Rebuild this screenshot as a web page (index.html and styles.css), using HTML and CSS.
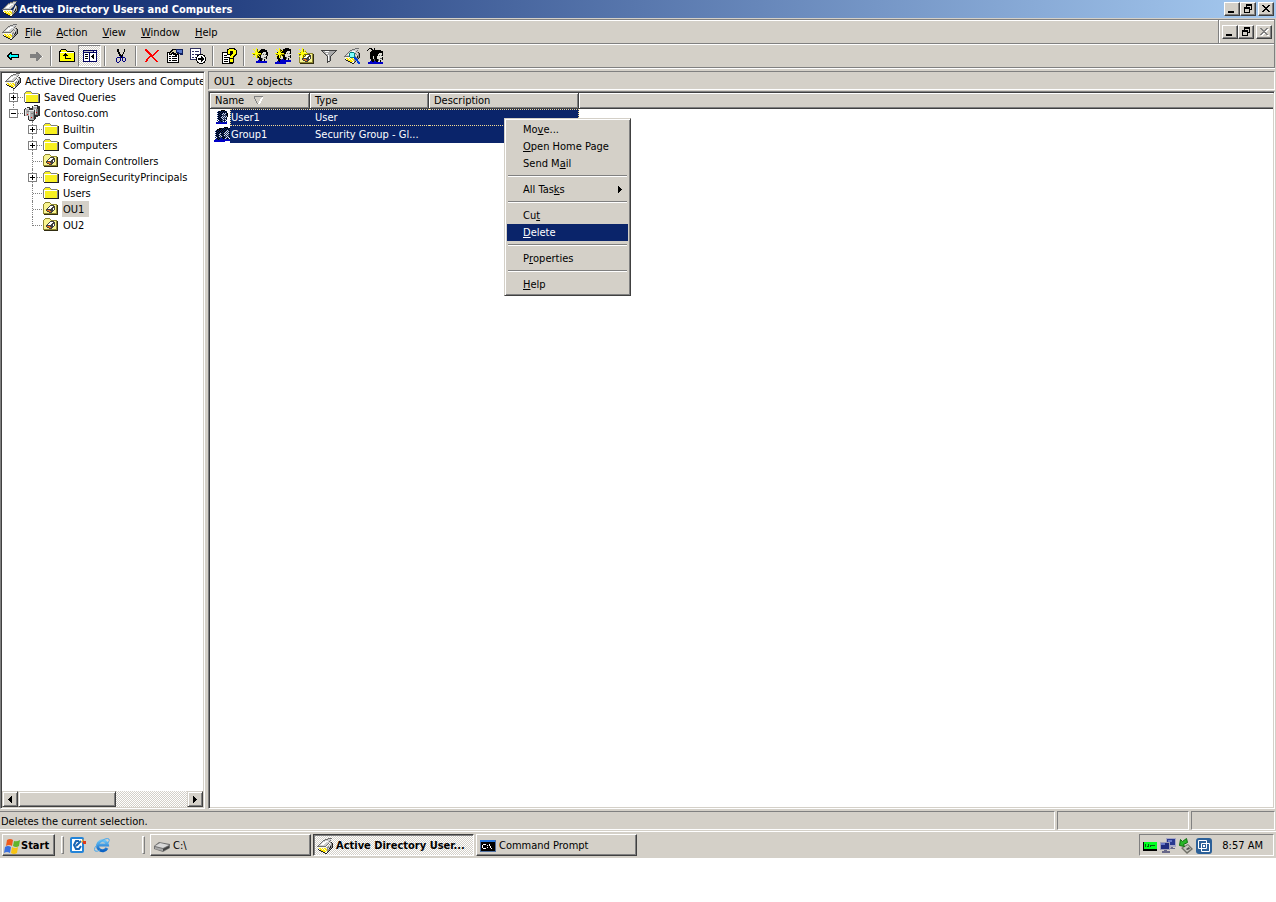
FILE: index.html
```html
<!DOCTYPE html>
<html lang="en">
<head>
    <meta charset="UTF-8">
    <meta name="viewport" content="width=device-width, initial-scale=1.0">
    <title>Active Directory Users and Computers</title>
    <link rel="stylesheet" href="styles.css">
</head>

<body>
<!-- icons -->
<svg class="defs" width="0" height="0" aria-hidden="true">
    <defs>
        <linearGradient id="ball" x1="0" y1="0" x2="0" y2="1">
            <stop offset="0" stop-color="#6cc4f5"/><stop offset="1" stop-color="#0b62c4"/>
        </linearGradient>
    </defs>
    <symbol id="book" viewBox="0 0 16 16">
        <path fill="#707070" d="M0 8h1v-1h1v-1h1v-1h1v-1h1v-1h1v-1h2v-1h3v-1h4v1h-1v2h-1v1h-1v2h-1v1h-1v1h-1v1h-9z"/>
        <path fill="#d0d0d0" d="M2 8v-1h1v-1h1v-1h1v-1h1v-1h2v-1h3v-1h3v1h-1v1h-1v2h-1v1h-1v1h-1v1z"/>
        <path fill="#fff" d="M4 7v-1h1v-1h1v-1h2v-1h3v1h-2v1h-1v1h-1v1z"/>
        <path fill="#f8f8e8" d="M1 9h9v1h1v5h-3v-1h-2v-1h-2v-1h-2v-1h-1z"/>
        <path fill="#ffe600" d="M2 10h2v1h-2zM5 10h1v1h-1zM7 10h2v1h-2zM3 11h2v1h-2zM6 11h1v1h-1zM8 11h2v1h-2zM4 12h4v1h-4zM9 12h1v1h-1zM6 13h3v1h-3z"/>
        <path fill="#909090" d="M10 9h1v-1h1v-2h1v-2h2v1h1v5h-1v1h-1v1h-1v1h-1v1h-1v1h-1v-5h-1z"/>
        <path fill="#e0e0e0" d="M12 7h1v2h-1zM13 5h1v2h-1zM11 10h1v1h-1z"/>
        <path fill="#202020" d="M15 5h1v5h-1zM14 10h1v1h-1zM13 11h1v1h-1zM12 12h1v1h-1zM11 13h1v1h-1zM10 14h1v1h-1zM8 15h2v1h-2zM6 14h2v1h-2zM4 13h2v1h-2zM2 12h2v1h-2zM1 11h1v1h-1zM14 4h1v1h-1zM13 8h1v2h-1zM12 10h1v1h-1z"/>
    </symbol>
    <symbol id="folder" viewBox="0 0 16 16">
        <path fill="#f8f020" d="M1 3h1v-1h5l1 2h7v9h-14z"/>
        <path fill="#808080" d="M2 2h5v1h-5zM1 3h1v1h-1zM7 3h1v1h-1zM8 4h6v1h-6zM0 4h1v9h-1zM14 5h1v8h-1z"/>
        <path fill="#fff" d="M1 5h13v1h-13zM1 5h1v8h-1z"/>
        <path fill="#202020" d="M15 5h1v9h-1zM1 13h14v1h-14z"/>
    </symbol>
    <symbol id="ou" viewBox="0 0 16 16">
        <path fill="#908830" d="M0 3h1v-1h1v-1h5v1h1v1h6v10h-14z"/>
        <path fill="#f8f490" d="M1 3h1v-1h5v1h1v1h5v8h-12z"/>
        <path fill="#302c10" d="M14 4h1v10h-14v-1h13z"/>
        <path fill="#404040" d="M3 8h1v-1h1v-1h1v-1h1v-1h4v1h1v4h-1v1h-1v1h-1v1h-3v-1h-2v-1h-1z"/>
        <path fill="#fff" d="M5 7h1v-1h1v-1h3v1h-1v1h-1v1h-3zM10 7h1v2h-1z"/>
        <path fill="#f07018" d="M4 9h3v1h-3zM6 10h2v1h-2z"/>
    </symbol>
    <symbol id="domain" viewBox="0 0 16 16">
        <path fill="#303030" d="M0 4h1v-1h2v-1h3v1h2v-2h2v-1h4v1h2v10h-2v1h-2v2h-1v1h-1v1h-5v-1h-1v-4h-4z"/>
        <path fill="#b0b0b0" d="M1 4h4v7h-4zM5 6h5v9h-5zM9 2h4v8h-2v-5h-2z"/>
        <path fill="#e8e8e8" d="M2 3h3v1h-3zM5 5h5v1h-5zM9 1h4v1h-4zM1 5h1v5h-1zM5 7h1v7h-1zM11 4h1v5h-1z"/>
        <path fill="#808080" d="M3 6h2v1h-2zM7 8h3v1h-3zM12 4h2v6h-2zM9 7h1v7h-1z"/>
        <path fill="#e00000" d="M3 9h1v1h-1zM7 12h1v1h-1zM12 7h1v1h-1z"/>
    </symbol>
    <symbol id="back" viewBox="0 0 16 16">
        <path d="M1 8h1v-1h1v-1h1v-1h1v-1h2v2h7v4h-7v2h-2v-1h-1v-1h-1v-1h-1v-1h-1z"/>
        <path fill="#00ffff" d="M3 8h1v-1h1v-1h1v1h7v2h-7v1h-1v-1h-1v-1h-1z"/>
    </symbol>
    <symbol id="forward" viewBox="0 0 16 16">
        <path fill="#fff" d="M3 10h6v2h3v-1h1v-1h1v-1h1v-1h-1v2h-2v2h-3v-2h-6z"/>
        <path fill="#808080" d="M2 6h6v-2h2v1h1v1h1v1h1v1h1v1h-1v1h-1v1h-1v1h-1v1h-2v-3h-6z"/>
    </symbol>
    <symbol id="up" viewBox="0 0 16 16">
        <path d="M1 2h1v-1h5v1h1v1h7v1h1v10h-16v-11h1z"/>
        <path fill="#ffff00" d="M2 2h5v1h1v1h7v9h-14v-9h1z"/>
        <path fill="#fff" d="M1 4h14v1h-14z"/>
        <path d="M6 5h1v1h1v1h1v1h-2v2h5v1h-6v-3h-2v-1h1v-1h1z"/>
    </symbol>
    <symbol id="panes" viewBox="0 0 16 16">
        <path fill="#000060" d="M1 2h14v12h-14z"/>
        <path fill="#fff" d="M2 5h5v8h-5zM8 5h6v8h-6z"/>
        <path fill="#c0c0c0" d="M2 3h9v1h-9z"/>
        <path fill="#fff" d="M12 3h2v1h-2z"/>
        <path d="M3 6h3v1h-3zM3 8h3v1h-3zM3 10h3v1h-3zM9 8h1v-1h1v-1h1v5h-1v-1h-1v-1h-1z"/>
    </symbol>
    <symbol id="cut" viewBox="0 0 16 16">
        <path d="M5 1h1v3h1v2h1v1h1v-1h1v-2h1v-3h1v3h-1v2h-1v2h-1v2h-2v-2h-1v-2h-1v-2h-1v-3z"/>
        <path fill="#000080" d="M7 8h1v5h-1zM4 9h3v1h-3zM3 10h1v4h-1zM4 14h2v1h-2zM6 13h1v1h-1zM9 8h1v5h-1zM10 9h2v1h-2zM12 10h1v3h-1zM10 13h2v1h-2z"/>
    </symbol>
    <symbol id="delete" viewBox="0 0 16 16">
        <path fill="#ff0000" d="M1 1h2v1h1v1h1v1h1v1h1v1h1v1h1v-1h1v-1h1v-1h1v-1h1v-1h2v1h-1v1h-1v1h-1v1h-1v1h-1v1h-1v1h1v1h1v1h1v1h1v1h1v1h-2v-1h-1v-1h-1v-1h-1v-1h-1v-1h-2v1h-1v1h-1v2h-1v1h-2v-1h1v-2h1v-1h1v-1h1v-1h1v-1h-1v-1h-1v-1h-1v-1h-1v-1h-1v-1h-1z"/>
    </symbol>
    <symbol id="props" viewBox="0 0 16 16">
        <path d="M0 4h12v11h-12z"/><path fill="#fff" d="M1 5h10v9h-10z"/>
        <path d="M2 8h2v1h-2zM5 8h5v1h-5zM2 10h2v1h-2zM5 10h5v1h-5zM2 12h2v1h-2zM5 12h5v1h-5z"/>
        <path d="M2 6v-2h1v-1h1v-1h1v-1h5v1h1v5h-1v1h-2v-1h-2v-1h-1v1h-3z"/>
        <path fill="#d8d0a8" d="M3 5h1v-1h1v-1h1v-1h3v1h1v3h-1v-1h-2v-1h-2v1h-1v1h-1z"/>
        <path fill="#102060" d="M9 1h7v6h-3v-1h-2v-1h-2z"/><path fill="#5878c8" d="M10 2h5v3h-3v-1h-2z"/>
    </symbol>
    <symbol id="export" viewBox="0 0 16 16">
        <path fill="#303060" d="M0 0h11v12h-11z"/><path fill="#fff" d="M1 1h9v10h-9z"/>
        <path fill="#303060" d="M2 3h2v1h-2zM5 3h4v1h-4zM2 6h2v1h-2zM5 6h4v1h-4zM2 9h2v1h-2zM5 9h3v1h-3z"/>
        <path d="M9 6h4v1h2v2h1v4h-1v2h-2v1h-4v-1h-2v-2h-1v-4h1v-2h2z"/>
        <path fill="#fff" d="M9 7h4v1h1v1h1v4h-1v1h-1v1h-4v-1h-1v-1h-1v-4h1v-1h1z"/>
        <path d="M8 10h3v-2h1v1h1v1h1v2h-1v1h-1v1h-1v-2h-3z"/>
    </symbol>
    <symbol id="help" viewBox="0 0 16 16">
        <path d="M1 4h11v12h-11z"/><path fill="#fff" d="M2 5h9v10h-9z"/>
        <path d="M3 7h3v1h-3zM3 9h5v1h-5zM3 11h4v1h-4zM3 13h4v1h-4z"/>
        <path d="M6 1h2v-1h6v1h1v1h1v5h-1v1h-1v1h-1v6h-5v-6h1v-2h-3z"/>
        <path fill="#ffff00" d="M7 2h1v-1h5v1h2v4h-1v1h-1v1h-1v2h-3v-2h1v-1h1v-1h1v-3h-3v3h-2zM9 11h3v3h-3z"/>
    </symbol>
    <symbol id="person" viewBox="0 0 16 16">
        <path fill="#0000c8" d="M3 13h2v-1h7v1h2v2h-11z"/>
        <path d="M5 3h1v-1h2v-1h4v1h2v2h1v4h-1v3h-2v2h-5v-1h-1v-2h-1z"/>
        <path fill="#e0e0d8" d="M9 5h1v-1h3v3h1v1h-1v3h-2v2h-2v-3h-1v-3h1z"/>
        <path fill="#606060" d="M10 6h1v1h-1zM12 6h1v1h-1zM11 9h2v1h-2zM9 10h1v2h-1z"/>
    </symbol>
    <symbol id="star" viewBox="0 0 16 16">
        <path fill="#706800" d="M5 1h1v9h-1zM1 6h9v1h-9z"/>
        <path fill="#ffff00" d="M4 0h1v10h-1zM0 5h9v1h-9zM1 1h1v1h-1zM2 2h1v1h-1zM3 3h1v1h-1zM7 2h1v1h-1zM6 3h1v1h-1zM5 4h1v1h-1zM2 7h1v1h-1zM1 8h1v1h-1zM6 7h1v1h-1zM7 8h1v1h-1zM3 4h3v3h-3z"/>
    </symbol>
    <symbol id="new-user" viewBox="0 0 16 16">
        <use href="#person" x="1" y="0" width="16" height="16"/>
        <use href="#star" width="16" height="16"/>
    </symbol>
    <symbol id="new-group" viewBox="0 0 16 16">
        <use href="#person" x="-3" y="1" width="16" height="16"/>
        <use href="#person" x="2" y="-1" width="16" height="16"/>
        <use href="#star" width="16" height="16"/>
    </symbol>
    <symbol id="new-ou" viewBox="0 0 16 16">
        <use href="#ou" x="1" y="2" width="16" height="16"/>
        <use href="#star" width="16" height="16"/>
    </symbol>
    <symbol id="filter" viewBox="0 0 16 16">
        <path fill="#404040" d="M0 2h16v1h-1v1h-1v1h-1v1h-1v1h-1v1h-1v5h-1v1h-2v1h-1v-7h-1v-1h-1v-1h-1v-1h-1v-1h-1v-1h-1z"/>
        <path fill="#a8a8a8" d="M2 3h12v1h-1v1h-1v1h-1v1h-1v1h-1v5h-2v-5h-1v-1h-1v-1h-1v-1h-1v-1h-1z"/>
        <path fill="#fff" d="M3 3h5v1h-4zM5 5h2v1h-2zM7 7h1v6h-1z"/>
    </symbol>
    <symbol id="find" viewBox="0 0 16 16">
        <use href="#book" width="16" height="16"/>
        <path fill="#008080" d="M6 4h4v1h1v4h-1v1h-4v-1h-1v-4h1z"/><path fill="#80ffff" d="M6 5h4v4h-4z"/>
        <path fill="#0040e0" d="M10 9h2v1h1v1h1v2h1v1h1v2h-2v-1h-1v-2h-1v-1h-1v-1h-1z"/>
    </symbol>
    <symbol id="add-group" viewBox="0 0 16 16">
        <use href="#person" x="-2" y="1" width="16" height="16"/>
        <use href="#person" x="2" y="1" width="16" height="16"/>
        <path d="M0 2h1v-1h1v-1h3v1h1v1h1v-2h1v4h-4v-1h1v-1h-1v-1h-2v1h-1v1h-1z"/>
    </symbol>
    <symbol id="user" viewBox="0 0 16 16">
        <use href="#person" x="-1" y="0" width="16" height="16"/>
        <path stroke="#0a246a" stroke-dasharray="1 1" d="M4 2.500h10M3 3.500h10M4 4.500h10M3 5.500h10M4 6.500h10M3 7.500h10M4 8.500h10M3 9.500h10M4 10.500h9M3 11.500h10M4 12.500h9M3 13.500h10"/>
    </symbol>
    <symbol id="group" viewBox="0 0 16 16">
        <use href="#person" x="-3" y="1" width="16" height="16"/>
        <use href="#person" x="2" y="0" width="16" height="16"/>
        <path stroke="#0a246a" stroke-dasharray="1 1" d="M8 2.500h7M7 3.500h9M2 4.500h14M1 5.500h15M2 6.500h14M1 7.500h15M2 8.500h14M1 9.500h15M2 10.500h14M1 11.500h15M2 12.500h14M1 13.500h15"/>
    </symbol>
    <symbol id="sort" viewBox="0 0 9 8">
        <path fill="#808080" d="M0 0h9v1h-8v2h1v2h1v2h1v1h-1v-1h-1v-2h-1v-2h-1z"/><path fill="#fff" d="M8 1h1v2h-1v2h-1v2h-1v1h-2v-1h1v-2h1v-2h1z"/>
    </symbol>
    <symbol id="min" viewBox="0 0 12 10"><path d="M2 7h6v2h-6z"/></symbol>
    <symbol id="restore" viewBox="0 0 12 10">
        <path d="M4 0h6v6h-2v-1h1v-3h-4v1h-1zM2 3h6v6h-6zM3 5v3h4v-3z" fill-rule="evenodd"/>
    </symbol>
    <symbol id="close" viewBox="0 0 12 10">
        <path d="M2 1h2v1h1v1h2v-1h1v-1h2v1h-1v1h-1v1h-1v1h1v1h1v1h1v1h-2v-1h-1v-1h-2v1h-1v1h-2v-1h1v-1h1v-1h1v-1h-1v-1h-1v-1h-1z"/>
    </symbol>
    <symbol id="left" viewBox="0 0 4 7"><path d="M0 3h1v-1h1v-1h1v-1h1v7h-1v-1h-1v-1h-1v-1h-1z"/></symbol>
    <symbol id="right" viewBox="0 0 4 7"><path d="M0 0h1v1h1v1h1v1h1v1h-1v1h-1v1h-1v1h-1z"/></symbol>
    <symbol id="flag" viewBox="0 0 16 16">
        <path fill="#f05a1c" d="M3 2q3-2 6 0l-1 6q-3-2-6 0z"/><path fill="#62b52c" d="M10 3q3 1 6-1l-1 6q-3 2-6 0z"/>
        <path fill="#3a70e0" d="M1 9q3-2 6 0l-1 6q-3-2-6 0z"/><path fill="#f8c414" d="M8 9q3 2 6 0l-1 6q-3 2-6 0z"/>
    </symbol>
    <symbol id="desktop" viewBox="0 0 16 16">
        <rect x="0" y="0" width="14" height="16" rx="2" fill="#2384d8"/>
        <path fill="#fff" d="M2 2h10v12h-10z"/>
        <path fill="none" stroke="#1764b4" stroke-width="2" d="M9 4h-3l-2 4 2 4h3l2-3M6 9l5-5"/>
        <path fill="#f0a830" d="M11 5l2-3 1 1-2 3z"/><path fill="#e03818" d="M13 4h3v3h-3z"/>
    </symbol>
    <symbol id="ie" viewBox="0 0 16 16">
        <path fill="none" stroke="url(#ball)" stroke-width="3" d="M13 11a5 5 0 1 1 .500-3h-9"/>
        <path fill="none" stroke="#4ba9ec" d="M1 14q-2-3 4-8 7-6 10-4 1 1-1 4M1 14q2 1 5-1"/>
    </symbol>
    <symbol id="drive" viewBox="0 0 16 16">
        <path fill="#707070" d="M0 8l5-4 11 2v4l-7 4-9-3z"/><path fill="#d8d8d8" d="M1 8l5-3 9 2-6 3z"/>
        <path fill="#a8a8a8" d="M1 9l8 2v2l-8-2z"/><path fill="#404040" d="M9 11l6-3v2l-6 3z"/>
    </symbol>
    <symbol id="cmd" viewBox="0 0 16 16">
        <path fill="#5070a0" d="M0 2h16v12h-16z"/><path fill="#2878e0" d="M0 2h15v2h-15z"/><path d="M1 4h14v9h-14z"/>
        <path fill="#fff" d="M3 6h3v1h-3zM2 7h1v3h-1zM3 10h3v1h-3zM7 7h1v1h-1zM7 9h1v1h-1zM9 6h1v2h-1zM10 8h1v2h-1zM11 10h1v1h-1z"/>
    </symbol>
    <symbol id="meter" viewBox="0 0 16 16">
        <path d="M1 4h14v9h-14z"/><path fill="#00ff20" d="M2 4h13v7h-13z"/>
        <path fill="#006010" d="M3 6h1v3h-1zM5 8h2v1h-2zM6 6h1v2h-1zM8 7h1v2h-1zM9 7h4v1h-4z"/>
    </symbol>
    <symbol id="network" viewBox="0 0 16 16">
        <path fill="#a8a8c8" d="M6 0h10v9h-10z"/><path fill="#283890" d="M7 1h8v6h-8z"/>
        <path fill="#a0a0b8" d="M0 4h10v8h-10z"/><path fill="#202c80" d="M1 5h8v6h-8z"/>
        <path fill="#6878c8" d="M1 5h4v2h-4zM8 2h4v2h-4z"/><path fill="#686888" d="M4 12h3v1h3v2h-8v-2h2zM11 9h2v1h2v1h-5z"/>
    </symbol>
    <symbol id="eject" viewBox="0 0 16 16">
        <path fill="#707068" d="M3 10l7-4 5 5-6 5z"/><path fill="#c8c8c0" d="M5 10l5-3 3 4-4 3z"/><path fill="#505050" d="M8 11l3-2 1 2-3 1z"/>
        <path fill="#28b828" stroke="#107010" d="M1.500 7.500l1-6 2 2 4-3 1 4-4 2 1 2z"/>
    </symbol>
    <symbol id="vm" viewBox="0 0 16 16">
        <rect x="0" y="0" width="16" height="16" rx="3" fill="#2c6098"/>
        <path fill="none" stroke="#fff" d="M2.500 2.500h8v8h-8zM5.500 5.500h8v8h-8z"/>
        <path fill="#fff" d="M7 7h2v2h-2z"/>
    </symbol>
</svg>

<div class="desktop">
    <header class="titlebar">
        <svg class="icon"><use href="#book"/></svg>
        <h1>Active Directory Users and Computers</h1>
        <div class="winbtns">
            <button aria-label="Minimize"><svg><use href="#min"/></svg></button>
            <button aria-label="Restore"><svg><use href="#restore"/></svg></button>
            <button class="x" aria-label="Close"><svg><use href="#close"/></svg></button>
        </div>
    </header>

    <div class="menubar">
        <svg class="icon"><use href="#book"/></svg>
        <nav class="menus">
            <button><u>F</u>ile</button>
            <button><u>A</u>ction</button>
            <button><u>V</u>iew</button>
            <button><u>W</u>indow</button>
            <button><u>H</u>elp</button>
        </nav>
        <div class="winbtns child">
            <button aria-label="Minimize window"><svg><use href="#min"/></svg></button>
            <button aria-label="Restore window"><svg><use href="#restore"/></svg></button>
            <button class="x" aria-label="Close window" disabled><svg><use href="#close"/></svg></button>
        </div>
    </div>

    <div class="toolbar">
        <button aria-label="Back"><svg class="icon"><use href="#back"/></svg></button>
        <button aria-label="Forward" disabled><svg class="icon"><use href="#forward"/></svg></button>
        <span class="sep"></span>
        <button aria-label="Up one level"><svg class="icon"><use href="#up"/></svg></button>
        <button class="pressed" aria-label="Show console tree"><svg class="icon"><use href="#panes"/></svg></button>
        <span class="sep"></span>
        <button aria-label="Cut"><svg class="icon"><use href="#cut"/></svg></button>
        <span class="sep"></span>
        <button aria-label="Delete"><svg class="icon"><use href="#delete"/></svg></button>
        <button aria-label="Properties"><svg class="icon"><use href="#props"/></svg></button>
        <button aria-label="Export list"><svg class="icon"><use href="#export"/></svg></button>
        <span class="sep"></span>
        <button aria-label="Help"><svg class="icon"><use href="#help"/></svg></button>
        <span class="sep"></span>
        <button aria-label="New user"><svg class="icon"><use href="#new-user"/></svg></button>
        <button aria-label="New group"><svg class="icon"><use href="#new-group"/></svg></button>
        <button aria-label="New organizational unit"><svg class="icon"><use href="#new-ou"/></svg></button>
        <button aria-label="Filter"><svg class="icon"><use href="#filter"/></svg></button>
        <button aria-label="Find"><svg class="icon"><use href="#find"/></svg></button>
        <button aria-label="Add to group"><svg class="icon"><use href="#add-group"/></svg></button>
    </div>

    <main class="panes">
        <aside class="treepane">
            <ul class="tree">
                <li class="root"><svg class="icon"><use href="#book"/></svg><span>Active Directory Users and Computers</span></li>
                <li class="l1"><button class="box plus" aria-label="Expand"></button><svg class="icon"><use href="#folder"/></svg><span>Saved Queries</span></li>
                <li class="l1 end"><button class="box" aria-label="Collapse"></button><svg class="icon"><use href="#domain"/></svg><span>Contoso.com</span></li>
                <li class="l2"><button class="box plus" aria-label="Expand"></button><svg class="icon"><use href="#folder"/></svg><span>Builtin</span></li>
                <li class="l2"><button class="box plus" aria-label="Expand"></button><svg class="icon"><use href="#folder"/></svg><span>Computers</span></li>
                <li class="l2"><svg class="icon"><use href="#ou"/></svg><span>Domain Controllers</span></li>
                <li class="l2"><button class="box plus" aria-label="Expand"></button><svg class="icon"><use href="#folder"/></svg><span>ForeignSecurityPrincipals</span></li>
                <li class="l2"><svg class="icon"><use href="#folder"/></svg><span>Users</span></li>
                <li class="l2 current"><svg class="icon"><use href="#ou"/></svg><span>OU1</span></li>
                <li class="l2 end"><svg class="icon"><use href="#ou"/></svg><span>OU2</span></li>
            </ul>
            <div class="scrollbar">
                <button aria-label="Scroll left"><svg><use href="#left"/></svg></button>
                <div class="thumb"></div>
                <div class="track"></div>
                <button aria-label="Scroll right"><svg><use href="#right"/></svg></button>
            </div>
        </aside>

        <section class="content">
            <div class="caption"><span>OU1</span><span>2 objects</span></div>
            <div class="list">
                <table>
                    <colgroup><col class="c-name"><col class="c-type"><col class="c-desc"><col></colgroup>
                    <thead>
                    <tr>
                        <th>Name<svg class="sort"><use href="#sort"/></svg></th>
                        <th>Type</th>
                        <th>Description</th>
                        <td></td>
                    </tr>
                    </thead>
                    <tbody>
                    <tr class="focus">
                        <td class="name"><div><svg class="icon"><use href="#user"/></svg><span>User1</span></div></td>
                        <td>User</td>
                        <td class="last"></td>
                        <td></td>
                    </tr>
                    <tr>
                        <td class="name"><div><svg class="icon"><use href="#group"/></svg><span>Group1</span></div></td>
                        <td>Security Group - Gl...</td>
                        <td></td>
                        <td></td>
                    </tr>
                    </tbody>
                </table>
            </div>
        </section>
    </main>

    <div class="status">
        <div class="message">Deletes the current selection.</div>
        <div class="part-a"></div>
        <div class="part-b"></div>
    </div>

    <footer class="taskbar">
        <button class="start"><svg class="icon"><use href="#flag"/></svg>Start</button>
        <span class="grip"></span>
        <div class="quick">
            <button aria-label="Show desktop"><svg class="icon"><use href="#desktop"/></svg></button>
            <button aria-label="Internet Explorer"><svg class="icon"><use href="#ie"/></svg></button>
        </div>
        <span class="grip"></span>
        <div class="tasks">
            <button><svg class="icon"><use href="#drive"/></svg>C:\</button>
            <button class="active"><svg class="icon"><use href="#book"/></svg>Active Directory User...</button>
            <button><svg class="icon"><use href="#cmd"/></svg>Command Prompt</button>
        </div>
        <div class="tray">
            <svg class="icon"><use href="#meter"/></svg>
            <svg class="icon"><use href="#network"/></svg>
            <svg class="icon"><use href="#eject"/></svg>
            <svg class="icon"><use href="#vm"/></svg>
            <time>8:57 AM</time>
        </div>
    </footer>

    <div class="context" role="menu">
        <button role="menuitem">Mo<u>v</u>e...</button>
        <button role="menuitem"><u>O</u>pen Home Page</button>
        <button role="menuitem">Send M<u>a</u>il</button>
        <hr>
        <button role="menuitem">All Tas<u>k</u>s<svg><use href="#right"/></svg></button>
        <hr>
        <button role="menuitem">Cu<u>t</u></button>
        <button role="menuitem" class="hot"><u>D</u>elete</button>
        <hr>
        <button role="menuitem">P<u>r</u>operties</button>
        <hr>
        <button role="menuitem"><u>H</u>elp</button>
    </div>
</div>
</body>
</html>
```
FILE: styles.css
```css
* {
    margin: 0;
    padding: 0;
    box-sizing: border-box;
}

body {
    background: white;
    font: 11px/16px Tahoma, "DejaVu Sans Condensed", "Liberation Sans", sans-serif;
    color: black;
}

button {
    font: inherit;
    color: inherit;
    background: none;
    border: 0;
}

u {
    text-underline-offset: 1px;
}

.defs {
    position: absolute;
}

svg {
    flex: none;
    shape-rendering: crispEdges;
}

.icon {
    width: 16px;
    height: 16px;
}

.desktop {
    position: relative;
    display: flex;
    flex-direction: column;
    min-height: calc(100vh - 44px);
    background: #d4d0c8;
}

/* title bar */
.titlebar {
    display: flex;
    align-items: center;
    height: 18px;
    padding: 0 2px;
    background: linear-gradient(to right, #0a246a, #a6caf0);
    color: white;
}

.titlebar h1 {
    flex: 1;
    padding: 1px 0 0 1px;
    font-size: 11px;
    font-weight: bold;
    white-space: nowrap;
}

.winbtns {
    display: flex;
    align-items: center;
}

.winbtns button {
    display: flex;
    width: 16px;
    height: 14px;
    padding: 1px;
    background: #d4d0c8;
    border: 1px solid;
    border-color: white #404040 #404040 white;
    box-shadow: inset -1px -1px #808080;
}

.winbtns svg {
    width: 12px;
    height: 10px;
}

.winbtns .x {
    margin-left: 2px;
}

.winbtns button:disabled svg {
    fill: #808080;
    filter: drop-shadow(1px 1px 0 white);
}

/* menu bar */
.menubar {
    display: flex;
    align-items: center;
    height: 25px;
    margin: 1px 1px 0 0;
    padding-left: 2px;
    border: 1px solid #808080;
    border-left: 0;
    box-shadow: inset 0 1px white, 0 1px white;
}

.menus {
    flex: 1;
    display: flex;
    gap: 1px;
    padding-top: 2px;
}

.menus button {
    padding: 0 7px;
}

.child {
    align-self: stretch;
    padding: 1px 2px 0 3px;
    border-left: 1px solid #808080;
    box-shadow: inset 1px 0 white;
}

/* toolbar */
.toolbar {
    display: flex;
    align-items: center;
    height: 24px;
    margin-right: 1px;
    padding: 1px 0 0 1px;
    border-right: 1px solid #808080;
    border-bottom: 1px solid #808080;
    box-shadow: 0 1px white;
}

.toolbar button {
    display: flex;
    align-items: center;
    justify-content: center;
    width: 23px;
    height: 22px;
}

.toolbar .pressed {
    background: repeating-conic-gradient(white 0 25%, #d4d0c8 0 50%) 0 0 / 2px 2px;
    border: 1px solid;
    border-color: #808080 white white #808080;
}

.toolbar .sep {
    width: 2px;
    height: 20px;
    margin: 0 3px;
    background: linear-gradient(to right, #808080 50%, white 50%);
}

/* panes */
.panes {
    flex: 1;
    display: flex;
    gap: 3px;
    padding: 3px 1px 2px 0;
}

.treepane {
    flex: none;
    display: flex;
    flex-direction: column;
    width: 205px;
    background: white;
    border: 1px solid;
    border-color: #808080 white white #808080;
    box-shadow: inset 1px 1px #404040, inset -1px -1px #d4d0c8;
    padding: 1px;
}

.tree {
    flex: 1;
    list-style: none;
    overflow: hidden;
}

.tree li {
    position: relative;
    display: flex;
    align-items: center;
    height: 16px;
    white-space: nowrap;
}

.tree span {
    height: 16px;
    padding: 1px 5px 0 1px;
    margin-left: 3px;
}

.tree .root {
    padding-left: 3px;
}

.tree .l1 {
    padding-left: 22px;
}

.tree .l2 {
    padding-left: 41px;
}

/* dotted connectors */
.tree .l1::before,
.tree .l2::before {
    content: "";
    position: absolute;
    left: 11px;
    top: 0;
    bottom: 0;
    width: 10px;
    border-left: 1px dotted #808080;
    background: repeating-linear-gradient(to right, #808080 0 1px, white 1px 2px) 0 8px / 100% 1px no-repeat;
}

.tree .l2::before {
    left: 30px;
}

.tree .end::before {
    bottom: 7px;
}

.tree .box {
    position: absolute;
    left: 7px;
    top: 4px;
    width: 9px;
    height: 9px;
    border: 1px solid #808080;
    background: linear-gradient(black, black) center / 5px 1px no-repeat, white;
}

.tree .l2 .box {
    left: 26px;
}

.tree .plus {
    background: linear-gradient(black, black) center / 5px 1px no-repeat, linear-gradient(black, black) center / 1px 5px no-repeat, white;
}

.tree .current span {
    background: #d4d0c8;
}

.scrollbar {
    display: flex;
    height: 16px;
}

.scrollbar button,
.thumb {
    display: flex;
    align-items: center;
    justify-content: center;
    width: 16px;
    background: #d4d0c8;
    border: 1px solid;
    border-color: #d4d0c8 #404040 #404040 #d4d0c8;
    box-shadow: inset 1px 1px white, inset -1px -1px #808080;
}

.scrollbar svg {
    width: 4px;
    height: 7px;
}

.scrollbar .thumb {
    width: 49%;
}

.track {
    flex: 1;
    background: repeating-conic-gradient(white 0 25%, #d4d0c8 0 50%) 0 0 / 2px 2px;
}

.content {
    flex: 1;
    display: flex;
    flex-direction: column;
    min-width: 0;
}

.caption {
    display: flex;
    gap: 12px;
    height: 19px;
    padding: 2px 5px 0;
    line-height: 15px;
    border: 1px solid;
    border-color: #808080 white white #808080;
}

.list {
    flex: 1;
    margin-top: 1px;
    padding: 1px;
    background: white;
    border: 1px solid;
    border-color: #808080 white white #808080;
    box-shadow: inset 1px 1px #404040, inset -1px -1px #d4d0c8;
}

table {
    width: 100%;
    table-layout: fixed;
    border-collapse: separate;
    border-spacing: 0;
}

.c-name {
    width: 100px;
}

.c-type {
    width: 119px;
}

.c-desc {
    width: 150px;
}

thead th,
thead td {
    height: 16px;
    padding: 1px 5px 0;
    line-height: 14px;
    font-weight: normal;
    text-align: left;
    background: #d4d0c8;
    border-bottom: 1px solid #404040;
    box-shadow: inset 1px 1px white, inset 0 -1px #808080;
}

thead th {
    border-right: 1px solid #404040;
    box-shadow: inset 1px 1px white, inset -1px -1px #808080;
}

.sort {
    width: 9px;
    height: 8px;
    margin-left: 10px;
}

tbody td {
    height: 17px;
    padding: 1px 5px 0;
    line-height: 16px;
    white-space: nowrap;
    background: #0a246a;
    color: white;
}

tbody td:last-child {
    background: white;
}

tbody .name {
    padding: 0;
    background: white;
}

.name div {
    display: flex;
    padding-left: 4px;
}

.name span {
    flex: 1;
    height: 17px;
    background: #0a246a;
    padding: 1px 0 0 1px;
}

.focus td:not(.name):not(:last-child),
.focus span {
    border-top: 1px dotted #f5db95;
    border-bottom: 1px dotted #f5db95;
    line-height: 14px;
}

.focus span {
    border-left: 1px dotted #f5db95;
    padding-left: 0;
}

.focus td.last {
    border-right: 1px dotted #f5db95;
}

/* status bar */
.status {
    display: flex;
    gap: 2px;
    height: 19px;
    padding-right: 1px;
}

.status div {
    height: 19px;
    border: 1px solid;
    border-color: #808080 white white #808080;
}

.status .message {
    flex: 1;
    border-left: 0;
    padding: 2px 0 0 1px;
    line-height: 15px;
}

.part-a {
    width: 132px;
}

.part-b {
    width: 84px;
}

/* taskbar */
.taskbar {
    display: flex;
    align-items: center;
    height: 27px;
    margin-top: 1px;
    padding: 0 2px;
    border-top: 1px solid white;
}

.start,
.tasks button {
    display: flex;
    align-items: center;
    height: 22px;
    background: #d4d0c8;
    border: 1px solid;
    border-color: white #404040 #404040 white;
    box-shadow: inset -1px -1px #808080;
}

.start {
    gap: 1px;
    width: 53px;
    padding: 1px 0 0 1px;
    font-weight: bold;
}

.grip {
    width: 3px;
    height: 18px;
    margin: 0 5px 0 6px;
    border: 1px solid;
    border-color: white #808080 #808080 white;
}

.quick {
    display: flex;
    gap: 8px;
    width: 67px;
    padding-left: 1px;
}

.quick button {
    height: 16px;
}

.taskbar svg {
    shape-rendering: auto;
}

.tasks {
    flex: 1;
    display: flex;
    gap: 2px;
}

.tasks button {
    gap: 3px;
    flex: 0 1 161px;
    padding: 1px 3px 0;
    white-space: nowrap;
}

.tasks .active {
    font-weight: bold;
    border-color: #404040 white white #404040;
    box-shadow: inset 1px 1px #808080;
    background: repeating-conic-gradient(white 0 25%, #d4d0c8 0 50%) 0 0 / 2px 2px;
}

.tray {
    display: flex;
    align-items: center;
    gap: 2px;
    height: 22px;
    padding: 1px 10px 0 2px;
    border: 1px solid;
    border-color: #808080 white white #808080;
}

.tray time {
    padding-left: 8px;
}

/* context menu */
.context {
    position: absolute;
    left: 504px;
    top: 118px;
    width: 127px;
    padding: 2px;
    background: #d4d0c8;
    border: 1px solid;
    border-color: #d4d0c8 #404040 #404040 #d4d0c8;
    box-shadow: inset 1px 1px white, inset -1px -1px #808080;
}

.context button {
    display: flex;
    align-items: center;
    justify-content: flex-start;
    width: 100%;
    height: 17px;
    padding: 0 6px 0 16px;
    white-space: pre;
}

.context svg {
    width: 4px;
    height: 7px;
    margin-left: auto;
}

.context .hot {
    background: #0a246a;
    color: white;
}

.context hr {
    height: 2px;
    margin: 3px 1px 4px;
    border: 0;
    border-top: 1px solid #808080;
    border-bottom: 1px solid white;
}
```
